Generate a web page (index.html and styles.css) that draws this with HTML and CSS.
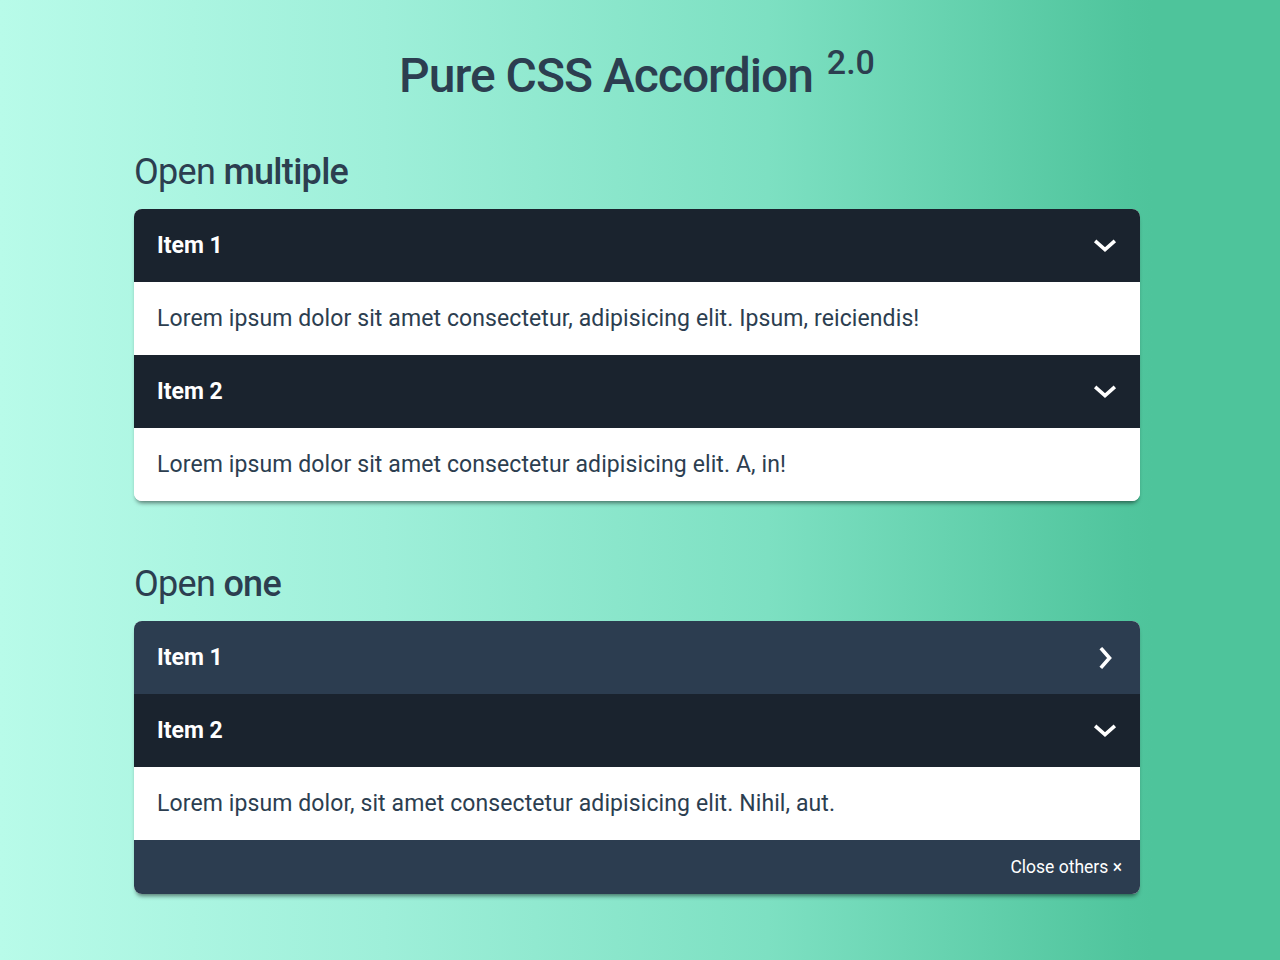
FILE: index.html
```html
<!DOCTYPE html>
<html lang="en">
<head>
<meta charset="utf-8">
<title>Pure CSS Accordion 2.0</title>
<link rel="stylesheet" href="styles.css">
</head>
<body>
<main class="page">
  <h1 class="title">Pure CSS Accordion <sup class="version">2.0</sup></h1>

  <section class="group">
    <h2 class="group-title">Open <strong>multiple</strong></h2>
    <div class="accordion">
      <div class="tab">
        <div class="tab-label is-open">
          <span>Item 1</span>
          <svg class="chev" viewBox="0 0 24 24" width="24" height="24"><path d="M3.5 8 L12 15.5 L20.5 8" /></svg>
        </div>
        <div class="tab-content">Lorem ipsum dolor sit amet consectetur, adipisicing elit. Ipsum, reiciendis!</div>
      </div>
      <div class="tab">
        <div class="tab-label is-open">
          <span>Item 2</span>
          <svg class="chev" viewBox="0 0 24 24" width="24" height="24"><path d="M3.5 8 L12 15.5 L20.5 8" /></svg>
        </div>
        <div class="tab-content">Lorem ipsum dolor sit amet consectetur adipisicing elit. A, in!</div>
      </div>
    </div>
  </section>

  <section class="group group-second">
    <h2 class="group-title">Open <strong>one</strong></h2>
    <div class="accordion">
      <div class="tab">
        <div class="tab-label">
          <span>Item 1</span>
          <svg class="chev" viewBox="0 0 24 24" width="24" height="24"><path d="M9 3.5 L16.5 12 L9 20.5" /></svg>
        </div>
      </div>
      <div class="tab">
        <div class="tab-label is-open">
          <span>Item 2</span>
          <svg class="chev" viewBox="0 0 24 24" width="24" height="24"><path d="M3.5 8 L12 15.5 L20.5 8" /></svg>
        </div>
        <div class="tab-content">Lorem ipsum dolor, sit amet consectetur adipisicing elit. Nihil, aut.</div>
      </div>
      <div class="tab-close">Close others &times;</div>
    </div>
  </section>
</main>
</body>
</html>
```

FILE: styles.css
```css
html, body {
  margin: 0;
  padding: 0;
}

body {
  min-height: 960px;
  font-family: Roboto, "Liberation Sans", sans-serif;
  color: #2c3e50;
  background: linear-gradient(to right, #b8fbe9 0%, #9eefd9 30%, #7de0c2 60%, #50c59d 88%, #4ec49b 90%, #4ec49b 100%);
  padding-right: 6px;
  box-sizing: border-box;
}

.page {
  width: 1006px;
  margin: 0 auto;
  padding-top: 45px;
  padding-bottom: 60px;
}

.title {
  margin: 0;
  text-align: center;
  font-size: 48px;
  line-height: 62px;
  font-weight: 500;
  letter-spacing: -1px;
  color: #2c3e50;
}

.version {
  font-size: 34px;
  font-weight: 500;
  letter-spacing: 0;
  vertical-align: top;
  position: relative;
  top: 0;
  line-height: 1;
  margin-left: 3px;
}

.group {
  margin-top: 44px;
}

.group-second {
  margin-top: 62px;
}

.group-title {
  margin: 0 0 15px;
  font-size: 36px;
  line-height: 43px;
  font-weight: 400;
  letter-spacing: -0.7px;
  color: #2c3e50;
}

.group-title strong {
  font-weight: 500;
}

.accordion {
  border-radius: 8px;
  overflow: hidden;
  box-shadow: 0 4px 4px -2px rgba(0, 0, 0, 0.5);
  background: #fff;
}

.tab-label {
  height: 73px;
  box-sizing: border-box;
  display: flex;
  align-items: center;
  justify-content: space-between;
  padding: 0 23px;
  background: #2c3d50;
  color: #fff;
  font-size: 23px;
  font-weight: 700;
}

.tab-label.is-open {
  background: #1a232e;
}

.chev {
  display: block;
  fill: none;
  stroke: #fff;
  stroke-width: 3.6;
  stroke-linecap: square;
  stroke-linejoin: miter;
}

.tab-content {
  height: 73px;
  box-sizing: border-box;
  display: flex;
  align-items: center;
  padding: 0 23px;
  background: #fff;
  color: #2c3e50;
  font-size: 23px;
  letter-spacing: 0.1px;
}

.tab-close {
  height: 54px;
  box-sizing: border-box;
  display: flex;
  align-items: center;
  justify-content: flex-end;
  padding: 0 18px;
  background: #2c3d50;
  color: #fff;
  font-size: 17.5px;
}
```
